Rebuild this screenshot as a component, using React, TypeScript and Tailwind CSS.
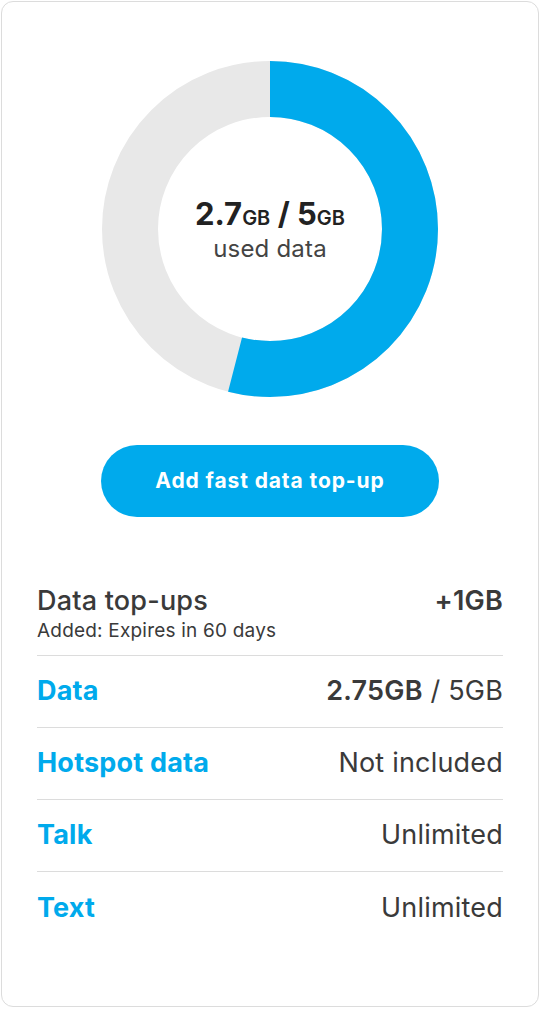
import React from "react"

const BLUE = "#00aaec"

const rows = [
  { label: "Data", value: <><span className="font-semibold">2.75GB</span> / 5GB</> },
  { label: "Hotspot data", value: "Not included" },
  { label: "Talk", value: "Unlimited" },
  { label: "Text", value: "Unlimited" },
]

function Donut({ used, total }: { used: number; total: number }) {
  const r = 140
  const c = 2 * Math.PI * r
  const pct = used / total
  return (
    <div className="relative w-[336px] h-[336px]">
      <svg width="336" height="336" viewBox="0 0 336 336">
        <circle cx="168" cy="168" r={r} fill="none" stroke="#e8e8e8" strokeWidth="56" />
        <circle
          cx="168"
          cy="168"
          r={r}
          fill="none"
          stroke={BLUE}
          strokeWidth="56"
          strokeDasharray={`${c * pct} ${c}`}
          transform="rotate(-90 168 168)"
        />
      </svg>
      <div className="absolute inset-0 flex flex-col items-center justify-center">
        <div className="text-[#222] font-bold leading-none">
          <span className="text-[31px]">2.7</span>
          <span className="text-[20px] font-semibold">GB</span>
          <span className="text-[31px]"> / 5</span>
          <span className="text-[20px] font-semibold">GB</span>
        </div>
        <div className="text-[24px] text-[#444] mt-[8px] leading-none tracking-[0.2px]">used data</div>
      </div>
    </div>
  )
}

export default function App() {
  return (
    <div className="w-[540px] h-[1009px] bg-white p-px font-['Inter',sans-serif]">
      <div className="h-[1006px] rounded-[12px] border border-[#dcdcdc] flex flex-col items-center pt-[59px] px-[35px]">
        <Donut used={2.7} total={5} />

        <button className="mt-[48px] w-[338px] h-[72px] rounded-full bg-[#00aaec] text-white text-[21px] font-bold tracking-[0.9px]">
          Add fast data top-up
        </button>

        <div className="w-full mt-[68px] tracking-[0.2px]">
          <div className="flex justify-between items-start pb-[14px] border-b border-[#dcdcdc]">
            <div>
              <div className="text-[27px] text-[#3a3a3a] font-medium leading-[32px]">Data top-ups</div>
              <div className="text-[19px] text-[#3a3a3a] mt-[3px] leading-[21px]">Added: Expires in 60 days</div>
            </div>
            <div className="text-[27px] text-[#3a3a3a] font-semibold leading-[32px]">+1GB</div>
          </div>
          {rows.map((row, i) => (
            <div
              key={row.label}
              className={`flex justify-between items-center h-[72px] ${i < rows.length - 1 ? "border-b border-[#dcdcdc]" : ""}`}
            >
              <span className="text-[27px] font-bold text-[#00aaec]">{row.label}</span>
              <span className="text-[27px] text-[#3a3a3a]">{row.value}</span>
            </div>
          ))}
        </div>
      </div>
    </div>
  )
}
